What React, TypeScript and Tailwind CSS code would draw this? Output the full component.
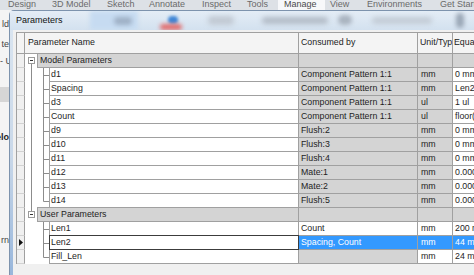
import React from "react";

type Row =
  | { kind: "group"; name: string; first?: boolean }
  | {
      kind: "param";
      name: string;
      by: string;
      unit: string;
      eq: string;
      outer?: boolean;
      last?: boolean;
      selected?: boolean;
      byWhite?: boolean;
      unitWhite?: boolean;
    };

const rows: Row[] = [
  { kind: "group", name: "Model Parameters", first: true },
  { kind: "param", name: "d1", by: "Component Pattern 1:1", unit: "mm", eq: "0 mm", outer: true },
  { kind: "param", name: "Spacing", by: "Component Pattern 1:1", unit: "mm", eq: "Len2 / (Count - 1)", outer: true },
  { kind: "param", name: "d3", by: "Component Pattern 1:1", unit: "ul", eq: "1 ul", outer: true },
  { kind: "param", name: "Count", by: "Component Pattern 1:1", unit: "ul", eq: "floor(Len1 / Len2)", outer: true },
  { kind: "param", name: "d9", by: "Flush:2", unit: "mm", eq: "0 mm", outer: true },
  { kind: "param", name: "d10", by: "Flush:3", unit: "mm", eq: "0 mm", outer: true },
  { kind: "param", name: "d11", by: "Flush:4", unit: "mm", eq: "0 mm", outer: true },
  { kind: "param", name: "d12", by: "Mate:1", unit: "mm", eq: "0.000 mm", outer: true },
  { kind: "param", name: "d13", by: "Mate:2", unit: "mm", eq: "0.000 mm", outer: true },
  { kind: "param", name: "d14", by: "Flush:5", unit: "mm", eq: "0.000 mm", outer: true, last: true },
  { kind: "group", name: "User Parameters" },
  { kind: "param", name: "Len1", by: "Count", unit: "mm", eq: "200 mm", byWhite: true, unitWhite: true },
  { kind: "param", name: "Len2", by: "Spacing, Count", unit: "mm", eq: "44 mm", selected: true },
  { kind: "param", name: "Fill_Len", by: "", unit: "mm", eq: "24 mm", last: true, unitWhite: true },
];

const tabs = [
  { label: "Design", w: "w-[44px]" },
  { label: "3D Model", w: "w-[55px]" },
  { label: "Sketch", w: "w-[42px]" },
  { label: "Annotate", w: "w-[53px]" },
  { label: "Inspect", w: "w-[45px]" },
  { label: "Tools", w: "w-[31px]" },
];

function ParamTree({ outer, last }: { outer?: boolean; last?: boolean }) {
  return (
    <svg width="24" height="14" className="shrink-0">
      {outer && <line x1="6.5" y1="0" x2="6.5" y2="14" stroke="#8c8c8c" />}
      <line x1="18.5" y1="0" x2="18.5" y2={last ? 7.5 : 14} stroke="#8c8c8c" />
      <line x1="18.5" y1="7.5" x2="24" y2="7.5" stroke="#8c8c8c" />
    </svg>
  );
}

function GroupTree({ first }: { first?: boolean }) {
  return (
    <svg width="12" height="14" className="shrink-0">
      {first ? (
        <line x1="6.5" y1="9.5" x2="6.5" y2="14" stroke="#8c8c8c" />
      ) : (
        <line x1="6.5" y1="0" x2="6.5" y2="3.5" stroke="#8c8c8c" />
      )}
      <rect x="3.5" y="3.5" width="6" height="6" fill="#fff" stroke="#9a9a9a" />
      <line x1="5" y1="6.5" x2="8" y2="6.5" stroke="#333" />
    </svg>
  );
}

export default function App() {
  return (
    <div className="relative h-[275px] w-[474px] overflow-hidden bg-[#f4f4f4] font-['Liberation_Sans',Arial,sans-serif] text-[8.8px] text-[#1e1e1e]">
      {/* ribbon tabs of the app behind */}
      <div className="flex h-[10px] items-start bg-[#dde1e6] pl-[8px] text-[9px] leading-[9px] text-[#6a6a6a] whitespace-nowrap">
        {tabs.map((t) => (
          <div key={t.label} className={`${t.w} shrink-0`}>
            {t.label}
          </div>
        ))}
        <div className="h-[10px] w-[47px] shrink-0 bg-[#f7f8fa] pl-[6px] text-[#4a4a4a]">Manage</div>
        <div className="w-[42px] shrink-0 pl-[5px]">View</div>
        <div className="w-[73px] shrink-0">Environments</div>
        <div className="shrink-0">Get Started</div>
      </div>

      {/* left panel of the app behind */}
      <div className="flex w-[9px] flex-col overflow-hidden text-[9px] leading-[9px] text-[#444] whitespace-nowrap">
        <div className="mt-[10px] flex justify-end">ld</div>
        <div className="mt-[11px] flex justify-end">te</div>
        <div className="mt-[8px]">- U</div>
        <div className="mt-[21px] h-[15px] bg-[#d6d6d6]" />
        <div className="mt-[31px] flex justify-end font-bold text-[#222]">elo</div>
        <div className="mt-[94px] flex justify-end">rn</div>
      </div>

      {/* Parameters dialog */}
      <div className="absolute left-[9px] top-[10px] flex h-[290px] w-[490px] flex-col rounded-tl-[5px] border-l border-t border-[#7d93ad] bg-gradient-to-b from-[#dbe6f1] via-[#c9d8e9] to-[#8eafd8] pl-[3px]">
        {/* title bar with blurred ribbon behind the glass */}
        <div className="relative -ml-[3px] flex h-[19px] shrink-0 items-center overflow-hidden bg-gradient-to-b from-[#e4edf6] to-[#d3e1ef] pl-[6px]">
          <div className="absolute left-[80px] top-0 h-[19px] w-[48px] bg-[#c6dbf1] blur-[2px]" />
          <div className="absolute left-[104px] top-[6px] h-[8px] w-[18px] rounded-full bg-[#9fb1c6] blur-[2px]" />
          <div className="absolute left-[158px] top-[5px] h-[8px] w-[10px] rounded-full bg-[#3f86d6] blur-[1.5px]" />
          <div className="absolute left-[150px] top-[13px] h-[6px] w-[22px] rounded-full bg-[#e26a6a] blur-[2px]" />
          <div className="absolute left-[198px] top-[5px] h-[9px] w-[26px] rounded bg-[#c2cad4] blur-[2.5px]" />
          <div className="absolute left-[252px] top-[6px] h-[7px] w-[66px] rounded bg-[#b3bcc7] blur-[2.5px]" />
          <div className="absolute left-[328px] top-[4px] h-[10px] w-[14px] rounded-full bg-[#aab4c0] blur-[2px]" />
          <div className="absolute left-[362px] top-[6px] h-[7px] w-[60px] rounded bg-[#c3ccd6] blur-[2.5px]" />
          <div className="absolute left-[446px] top-[2px] h-[15px] w-[8px] rounded bg-[#9aa7b6] blur-[2px]" />
          <span className="relative text-[9px] text-[#111]">Parameters</span>
        </div>

        {/* client area */}
        <div className="flex-1 bg-[#f0f0f0] pl-[3px] pt-[2px]">
          <div className="grid w-max grid-cols-[8px_274px_119px_35px_120px] border-l border-t border-[#a0a0a0]">
            {/* header */}
            <div className="h-[21px] border-b border-r border-[#a0a0a0] bg-[#f4f4f4]" />
            <div className="flex h-[21px] items-center border-b border-r border-[#a0a0a0] bg-[#f4f4f4] pl-[3px] text-[#222]">
              Parameter Name
            </div>
            <div className="flex h-[21px] items-center border-b border-r border-[#a0a0a0] bg-[#f4f4f4] pl-[2px] text-[#222]">
              Consumed by
            </div>
            <div className="flex h-[21px] items-center overflow-hidden whitespace-nowrap border-b border-r border-[#a0a0a0] bg-[#f4f4f4] pl-[2px] text-[#222]">
              Unit/Type
            </div>
            <div className="flex h-[21px] items-center whitespace-nowrap border-b border-r border-[#a0a0a0] bg-[#f4f4f4] pl-[1px] text-[#222]">
              Equation
            </div>

            {rows.map((r, i) => {
              const rowHead = (
                <div
                  key={`h${i}`}
                  className="flex h-[14px] items-center justify-center border-b border-r border-b-[#d2d2d2] border-r-[#a0a0a0] bg-[#f0f0f0]"
                >
                  {r.kind === "param" && r.selected && (
                    <svg width="4" height="7">
                      <polygon points="0,0 4,3.5 0,7" fill="#111" />
                    </svg>
                  )}
                </div>
              );

              if (r.kind === "group") {
                return (
                  <React.Fragment key={i}>
                    {rowHead}
                    <div className="flex h-[14px] bg-white">
                      <GroupTree first={r.first} />
                      <div className="-mt-px flex h-[15px] flex-1 items-center border border-[#a0a0a0] bg-[#d4d4d4] pl-[2px]">
                        {r.name}
                      </div>
                    </div>
                    <div className="h-[14px] border-b border-r border-[#a0a0a0] bg-[#d4d4d4]" />
                    <div className="h-[14px] border-b border-r border-[#a0a0a0] bg-[#d4d4d4]" />
                    <div className="h-[14px] border-b border-r border-[#a0a0a0] bg-[#d4d4d4]" />
                  </React.Fragment>
                );
              }

              const sel = r.selected;
              return (
                <React.Fragment key={i}>
                  {rowHead}
                  <div className="flex h-[14px] bg-white">
                    <ParamTree outer={r.outer} last={r.last} />
                    {sel ? (
                      <div className="-mt-px flex h-[15px] flex-1 items-center border border-[#3c3c3c] bg-white pl-[1px]">
                        {r.name}
                      </div>
                    ) : (
                      <div className="flex h-[14px] flex-1 items-center border-b border-l border-r border-[#a0a0a0] bg-white pl-[1px]">
                        {r.name}
                      </div>
                    )}
                  </div>
                  <div
                    className={`flex h-[14px] items-center whitespace-nowrap border-b border-r border-[#a0a0a0] pl-[2px] ${
                      sel ? "bg-[#3399ff] text-white" : r.byWhite ? "bg-white" : "bg-[#d4d4d4]"
                    }`}
                  >
                    {r.by}
                  </div>
                  <div
                    className={`flex h-[14px] items-center border-b border-r border-[#a0a0a0] pl-[3px] ${
                      sel ? "bg-[#3399ff] text-white" : r.unitWhite ? "bg-white" : "bg-[#d4d4d4]"
                    }`}
                  >
                    {r.unit}
                  </div>
                  <div
                    className={`flex h-[14px] items-center whitespace-nowrap border-b border-r border-[#a0a0a0] pl-[2px] ${
                      sel ? "bg-[#3399ff] text-white" : "bg-white"
                    }`}
                  >
                    {r.eq}
                  </div>
                </React.Fragment>
              );
            })}
          </div>
        </div>
      </div>
    </div>
  );
}
